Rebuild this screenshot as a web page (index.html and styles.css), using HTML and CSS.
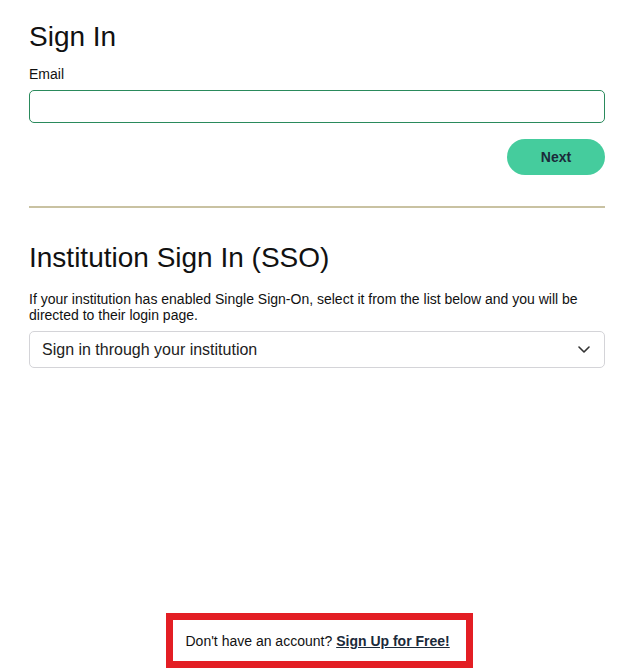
FILE: index.html
```html
<!DOCTYPE html>
<html lang="en">
<head>
<meta charset="utf-8">
<title>Sign In</title>
<link rel="stylesheet" href="styles.css">
</head>
<body>
<div class="page">
  <main class="content">
    <section class="signin">
      <h1 class="title">Sign In</h1>
      <label class="label" for="email">Email</label>
      <input class="input" id="email" type="email">
      <div class="actions">
        <button class="btn-next" type="button">Next</button>
      </div>
    </section>
    <hr class="divider">
    <section class="sso">
      <h2 class="title title-sso">Institution Sign In (SSO)</h2>
      <p class="desc">If your institution has enabled Single Sign-On, select it from the list below and you will be directed to their login page.</p>
      <div class="select">
        <span class="select-text">Sign in through your institution</span>
        <svg class="chevron" width="12" height="7" viewBox="0 0 12 7" aria-hidden="true"><path d="M1 1l5 5 5-5" fill="none" stroke="#333" stroke-width="1.6" stroke-linecap="round" stroke-linejoin="round"/></svg>
      </div>
    </section>
  </main>
  <footer class="footer">
    <div class="signup-box">
      <span class="signup-text">Don't have an account?</span>
      <a class="signup-link" href="#">Sign Up for Free!</a>
    </div>
  </footer>
</div>
</body>
</html>
```
FILE: styles.css
```css
html, body {
  margin: 0;
  padding: 0;
  background: #fff;
}
body {
  font-family: "Liberation Sans", Arial, sans-serif;
  color: #111;
}
.page {
  min-height: 670px;
  display: flex;
  flex-direction: column;
}
.content {
  width: 576px;
  margin-left: 29px;
  padding-top: 20px;
}
.title {
  margin: 0;
  font-size: 28px;
  font-weight: 400;
  line-height: 34px;
  color: #111;
}
.label {
  display: block;
  margin-top: 12px;
  font-size: 14px;
  line-height: 16px;
  color: #111;
}
.input {
  display: block;
  box-sizing: border-box;
  width: 576px;
  height: 33px;
  margin-top: 8px;
  border: 1px solid #2a8a5c;
  border-radius: 5px;
  padding: 0 10px;
  font-size: 16px;
  outline: none;
}
.actions {
  display: flex;
  justify-content: flex-end;
  margin-top: 16px;
}
.btn-next {
  width: 98px;
  height: 36px;
  border: 0;
  border-radius: 18px;
  background: #45cc9d;
  color: #1b2a3a;
  font-family: "Liberation Sans", Arial, sans-serif;
  font-size: 14px;
  font-weight: 700;
  cursor: pointer;
}
.divider {
  margin: 31px 0 0;
  border: 0;
  height: 2px;
  background: #c9c2a2;
}
.sso {
  margin-top: 33px;
}
.title-sso {
  font-size: 28px;
}
.desc {
  margin: 16px 0 0;
  font-size: 14px;
  line-height: 16px;
  color: #111;
}
.select {
  box-sizing: border-box;
  height: 37px;
  margin-top: 8px;
  border: 1px solid #d4d4d8;
  border-radius: 5px;
  padding: 0 14px 0 12px;
  display: flex;
  align-items: center;
  justify-content: space-between;
}
.select-text {
  font-size: 16px;
  color: #222;
}
.chevron {
  display: block;
}
.footer {
  margin-top: auto;
  display: flex;
  justify-content: center;
  padding-bottom: 2px;
  padding-left: 3px;
}
.signup-box {
  box-sizing: border-box;
  width: 307px;
  height: 55px;
  border: 7px solid #e31e24;
  display: flex;
  align-items: center;
  padding-left: 13px;
  font-size: 14px;
  color: #111;
  margin-right: 8px;
}
.signup-text {
  margin-right: 4px;
}
.signup-link {
  font-weight: 700;
  color: #1b2a3a;
  text-decoration: underline;
}
```
